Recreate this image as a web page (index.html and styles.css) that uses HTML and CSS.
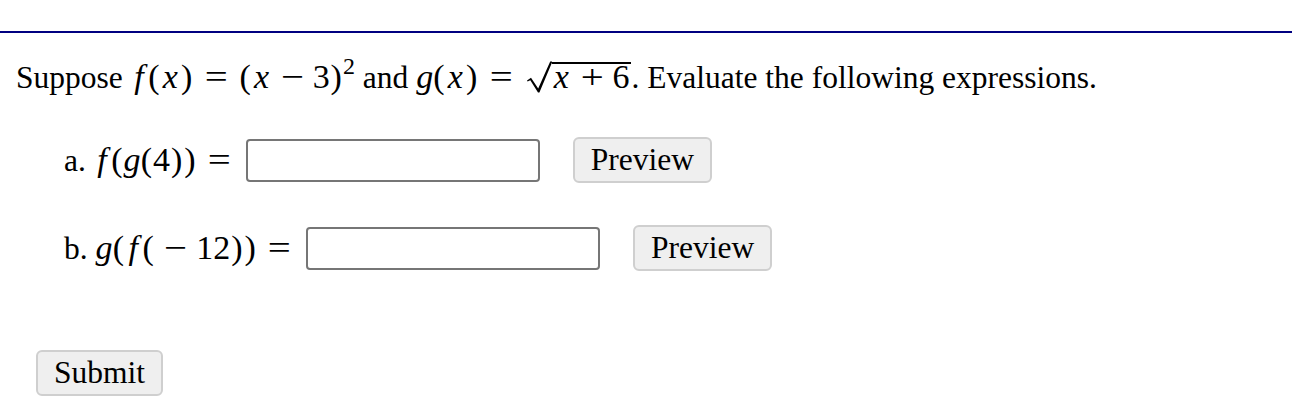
FILE: index.html
```html
<!DOCTYPE html>
<html lang="en">
<head>
    <meta charset="UTF-8">
    <title>Problem</title>
    <link rel="stylesheet" href="styles.css">
</head>
<body>
    <div class="rule"></div>
    <form class="problem">
        <p class="intro">Suppose <span class="math"><i class="mi f">f</i><span class="mo p">(</span><i class="mi x">x</i><span class="mo p">)</span><span class="mo rel">=</span><span class="mo p">(</span><i class="mi x">x</i><span class="mo bin">&minus;</span>3<span class="mo p">)</span><sup>2</sup></span> and <span class="math"><i class="mi g">g</i><span class="mo p">(</span><i class="mi x">x</i><span class="mo p">)</span><span class="mo rel">=</span><span class="sqrt"><svg class="surd" width="26" height="32" viewBox="0 0 26 32"><path d="M1 19.5 L5 16.8 L12.2 27.6 L24.2 0.4 L26 0.4 L26 1.6 L13.4 31.6 L12 31.6 L4.3 19.2 L1.6 20.6 Z" fill="#000"/></svg><span class="radicand"><i class="mi x">x</i><span class="mo bin">+</span>6</span></span></span>. Evaluate the following expressions.</p>

        <div class="part">
            <span class="prompt">a. <span class="math"><i class="mi f">f</i><span class="mo p">(</span><i class="mi g">g</i><span class="mo p">(</span>4<span class="mo p">)</span><span class="mo p">)</span><span class="mo rel">=</span></span></span>
            <input type="text" class="answer">
            <button type="button" class="btn preview">Preview</button>
        </div>

        <div class="part part-b">
            <span class="prompt">b. <span class="math"><i class="mi g">g</i><span class="mo p">(</span><i class="mi f">f</i><span class="mo p">(</span><span class="mo bin">&minus;</span>12<span class="mo p">)</span><span class="mo p">)</span><span class="mo rel">=</span></span></span>
            <input type="text" class="answer">
            <button type="button" class="btn preview">Preview</button>
        </div>

        <button type="submit" class="btn submit">Submit</button>
    </form>
</body>
</html>
```

FILE: styles.css
```css
body {
    margin: 0;
    font-family: "Liberation Serif", "Times New Roman", serif;
    font-size: 31.5px;
    color: #000;
    background: #fff;
}

.rule {
    margin-top: 31px;
    height: 2px;
    background-color: #000080;
}

.problem {
    padding-left: 16px;
}

.intro {
    margin: 26px 0 0 0;
    line-height: 36px;
    white-space: nowrap;
}

/* math, spaced like TeX */
.math {
    font-size: 34px;
    line-height: 36px;
}

.mi,
.mo {
    display: inline-block;
    text-align: center;
}

.mi {
    font-style: italic;
}

.mi.f { width: 0.49em; }
.mi.x { width: 0.572em; }
.mi.g { width: 0.477em; }

.mo.p { width: 0.389em; }

.mo.rel {
    width: 0.778em;
    margin: 0 0.278em;
    transform: scaleX(1.2);
}

.mo.bin {
    width: 0.778em;
    margin: 0 0.222em;
    transform: scaleX(1.2);
}

sup {
    font-size: 24px;
    line-height: 0;
    vertical-align: 14px;
}

.sqrt {
    display: inline-block;
    white-space: nowrap;
}

.surd {
    vertical-align: -5px;
    margin-left: 2px;
}

.radicand {
    display: inline-block;
    border-top: 2px solid #000;
    line-height: 26px;
    padding-right: 2px;
}

.part {
    display: flex;
    align-items: center;
    margin-top: 41px;
    padding-left: 48px;
    height: 46px;
    line-height: 36px;
    white-space: nowrap;
}

.part-b {
    margin-top: 42px;
}

.answer {
    width: 294px;
    height: 43px;
    box-sizing: border-box;
    border: 2px solid #767676;
    border-radius: 4px;
    margin-left: 4px;
    padding: 0 6px;
    font-size: 28px;
}

.btn {
    font-family: "Liberation Serif", "Times New Roman", serif;
    font-size: 31.5px;
    color: #000;
    background-color: #efefef;
    border: 2px solid #cfcfcf;
    border-radius: 6px;
    height: 46px;
    box-sizing: border-box;
    padding: 0 16px;
    cursor: pointer;
}

.preview {
    margin-left: 33px;
}

.submit {
    display: block;
    margin: 79px 0 0 20px;
}
```
